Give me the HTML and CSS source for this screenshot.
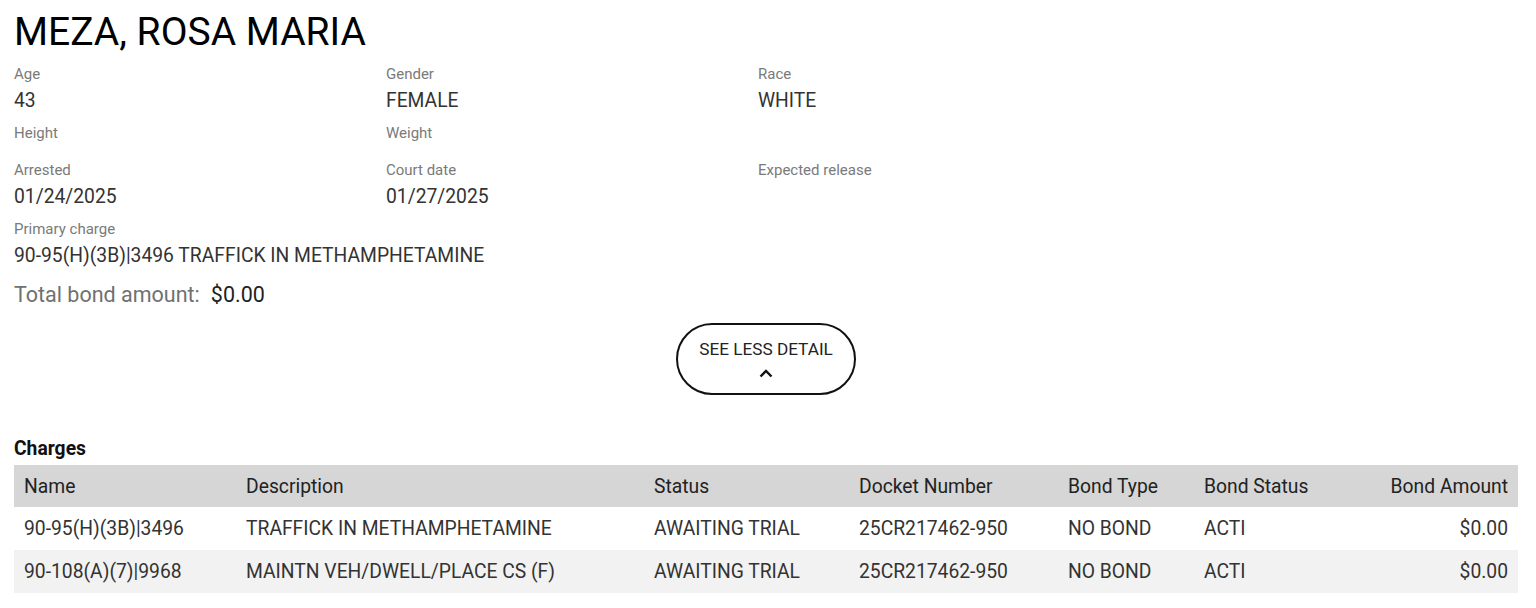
FILE: index.html
```html
<!DOCTYPE html>
<html lang="en">
<head>
<meta charset="utf-8">
<title>MEZA, ROSA MARIA</title>
<link rel="stylesheet" href="styles.css">
</head>
<body>
<main class="page">
  <h1 class="name">MEZA, ROSA MARIA</h1>
  <div class="details">
    <div class="field"><div class="label">Age</div><div class="value">43</div></div>
    <div class="field"><div class="label">Gender</div><div class="value">FEMALE</div></div>
    <div class="field"><div class="label">Race</div><div class="value">WHITE</div></div>
    <div class="field"><div class="label">Height</div><div class="value"></div></div>
    <div class="field"><div class="label">Weight</div><div class="value"></div></div>
    <div class="field"></div>
    <div class="field"><div class="label">Arrested</div><div class="value">01/24/2025</div></div>
    <div class="field"><div class="label">Court date</div><div class="value">01/27/2025</div></div>
    <div class="field"><div class="label">Expected release</div><div class="value"></div></div>
    <div class="field wide"><div class="label">Primary charge</div><div class="value">90-95(H)(3B)|3496 TRAFFICK IN METHAMPHETAMINE</div></div>
  </div>
  <div class="bond"><span class="bond-label">Total bond amount:</span><span class="bond-value">$0.00</span></div>
  <div class="toggle-wrap">
    <button class="toggle" type="button">
      <span class="toggle-text">SEE LESS DETAIL</span>
      <svg class="chevron" width="14" height="9" viewBox="0 0 14 9" aria-hidden="true"><path d="M1.5 7.5 L7 2 L12.5 7.5" fill="none" stroke="#111" stroke-width="2.4"/></svg>
    </button>
  </div>
  <h2 class="charges-title">Charges</h2>
  <table class="charges">
    <colgroup>
      <col class="c-name"><col class="c-desc"><col class="c-status"><col class="c-docket"><col class="c-btype"><col class="c-bstatus"><col class="c-amount">
    </colgroup>
    <thead>
      <tr><th>Name</th><th>Description</th><th>Status</th><th>Docket Number</th><th>Bond Type</th><th>Bond Status</th><th class="num">Bond Amount</th></tr>
    </thead>
    <tbody>
      <tr><td>90-95(H)(3B)|3496</td><td>TRAFFICK IN METHAMPHETAMINE</td><td>AWAITING TRIAL</td><td>25CR217462-950</td><td>NO BOND</td><td>ACTI</td><td class="num">$0.00</td></tr>
      <tr><td>90-108(A)(7)|9968</td><td>MAINTN VEH/DWELL/PLACE CS (F)</td><td>AWAITING TRIAL</td><td>25CR217462-950</td><td>NO BOND</td><td>ACTI</td><td class="num">$0.00</td></tr>
    </tbody>
  </table>
</main>
</body>
</html>
```
FILE: styles.css
```css
* { box-sizing: border-box; }
html, body { margin: 0; padding: 0; background: #fff; }
body { font-family: Roboto, "Liberation Sans", Arial, sans-serif; color: #333; }

.page { padding: 8px 18px 0 14px; }

.name {
  margin: 0;
  font-size: 39px;
  font-weight: 400;
  line-height: 48px;
  color: #000;
}

.details {
  display: grid;
  grid-template-columns: 372px 372px 372px;
  margin-top: 8px;
}
.field { padding-bottom: 11px; }
.field.wide { grid-column: 1 / -1; }
.label {
  font-size: 15px;
  line-height: 20px;
  color: #7a7a7a;
}
.value {
  margin-top: 6px;
  font-size: 19.3px;
  line-height: 22px;
  color: #333;
}

.bond {
  display: flex;
  align-items: baseline;
  gap: 11px;
  margin-top: 5px;
  line-height: 24px;
}
.bond-label { font-size: 21.5px; color: #707070; }
.bond-value { font-size: 21.5px; color: #222; }

.toggle-wrap {
  display: flex;
  justify-content: center;
  margin-top: 16px;
}
.toggle {
  width: 180px;
  height: 72px;
  border: 2px solid #111;
  border-radius: 36px;
  background: #fff;
  display: flex;
  flex-direction: column;
  align-items: center;
  justify-content: center;
  gap: 11px;
  padding: 0 0 1px;
  font-family: inherit;
  cursor: pointer;
}
.toggle-text { font-size: 17.2px; line-height: 18px; color: #222; }
.chevron { display: block; }

.charges-title {
  margin: 42px 0 0;
  font-size: 19.3px;
  font-weight: 700;
  line-height: 24px;
  color: #111;
}

.charges {
  width: 100%;
  border-collapse: collapse;
  table-layout: fixed;
  margin-top: 4px;
  font-size: 19.3px;
}
.c-name { width: 222px; }
.c-desc { width: 408px; }
.c-status { width: 205px; }
.c-docket { width: 209px; }
.c-btype { width: 136px; }
.c-bstatus { width: 166px; }
.charges th, .charges td {
  text-align: left;
  padding: 0 10px;
  height: 43px;
  font-weight: 400;
  white-space: nowrap;
}
.charges th { background: #d6d6d6; color: #222; height: 42px; }
.charges td { color: #333; }
.charges tbody tr:nth-child(even) td { background: #f2f2f2; }
.charges .num { text-align: right; }
```
